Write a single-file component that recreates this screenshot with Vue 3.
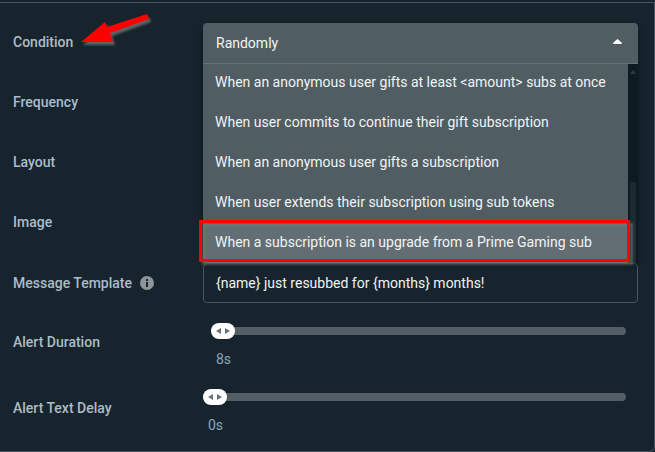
<script setup>
const fields = ['Condition', 'Frequency', 'Layout', 'Image']
const options = [
  'When an anonymous user gifts at least <amount> subs at once',
  'When user commits to continue their gift subscription',
  'When an anonymous user gifts a subscription',
  'When user extends their subscription using sub tokens',
  'When a subscription is an upgrade from a Prime Gaming sub'
]
const sliders = [
  { label: 'Alert Duration', value: '8s', offset: 8 },
  { label: 'Alert Text Delay', value: '0s', offset: 0 }
]
</script>

<template>
  <div class="panel">
    <div v-for="f in fields" :key="f" class="row">
      <div class="label">{{ f }}</div>
      <div class="field"></div>
    </div>

    <div class="row">
      <div class="label with-icon">
        Message Template
        <svg class="info" width="14" height="14" viewBox="0 0 14 14">
          <circle cx="7" cy="7" r="7" fill="#8d9599" />
          <rect x="6" y="6" width="2" height="5" fill="#17242d" />
          <rect x="6" y="3" width="2" height="2" fill="#17242d" />
        </svg>
      </div>
      <div class="input">{name} just resubbed for {months} months!</div>
    </div>

    <div v-for="s in sliders" :key="s.label" class="row slider-row">
      <div class="label">{{ s.label }}</div>
      <div class="slider" :style="{ paddingLeft: s.offset + 'px' }">
        <div class="track">
          <div class="thumb">
            <span class="tri left"></span>
            <span class="tri right"></span>
          </div>
        </div>
        <div class="value">{{ s.value }}</div>
      </div>
    </div>

    <div class="dropdown">
      <div class="selected">
        <span>Randomly</span>
        <svg class="caret" width="9" height="5" viewBox="0 0 9 5"><path d="M4.5 0 8.6 3.6Q9.2 5 8 5H1Q-.2 5 .4 3.6Z" fill="#fff" /></svg>
      </div>
      <div class="list">
        <div class="items">
          <div v-for="(o, i) in options" :key="o" class="option" :class="{ hover: i === 4 }">{{ o }}</div>
        </div>
        <div class="scrollbar">
          <span class="up"></span>
          <span class="bar"></span>
        </div>
      </div>
    </div>

    <div class="highlight"></div>

    <svg class="arrow" width="80" height="40" viewBox="0 0 80 40">
      <path d="M67 0 69 5 30 19 33 28H1L25 8 27 13Z" fill="#f00" />
    </svg>
  </div>
</template>

<style>
body { background: #17242d; }
</style>

<style scoped>
.panel {
  position: relative;
  box-sizing: border-box;
  margin-top: 2px;
  width: 655px;
  height: 450px;
  padding: 20px 0 0 13px;
  background: #17242d;
  border: 1px solid #46555d;
  border-left: 0;
  border-bottom-right-radius: 6px;
  font-family: Roboto, sans-serif;
  font-size: 14px;
  overflow: hidden;
}
.row {
  display: grid;
  grid-template-columns: 190px 435px;
  height: 40px;
  margin-bottom: 20px;
}
.slider-row { height: 46px; }
.label {
  line-height: 38px;
  font-weight: 500;
  color: #aabdc8;
  white-space: nowrap;
}
.with-icon { display: flex; align-items: center; height: 40px; }
.info { margin-left: 8px; }
.input {
  box-sizing: border-box;
  height: 40px;
  padding: 0 12px;
  line-height: 38px;
  color: #f0f3f4;
  border: 1px solid #46555d;
  border-radius: 4px;
}
.slider { box-sizing: border-box; width: 423px; padding-top: 4px; }
.track { height: 8px; border-radius: 4px; background: #535f65; }
.thumb {
  display: flex;
  align-items: center;
  justify-content: center;
  gap: 4px;
  position: relative;
  top: -4px;
  width: 24px;
  height: 16px;
  border-radius: 8px;
  background: #fff;
}
.tri { width: 0; height: 0; border-top: 3.5px solid transparent; border-bottom: 3.5px solid transparent; }
.tri.left { border-right: 5px solid #66737a; }
.tri.right { border-left: 5px solid #66737a; }
.value { margin: 16px 0 0 5px; line-height: 16px; color: #8fa7b6; }
.dropdown {
  position: absolute;
  left: 203px;
  top: 20px;
  width: 435px;
  border-radius: 4px 4px 0 0;
  background: #505d63;
  color: #f2f4f5;
  box-shadow: 0 2px 5px rgba(0, 0, 0, .45);
}
.selected {
  display: flex;
  align-items: center;
  justify-content: space-between;
  box-sizing: border-box;
  height: 41px;
  padding: 0 16px 0 13px;
  border-bottom: 1px solid #667277;
  line-height: 38px;
}
.caret { margin-bottom: 4px; }
.list { display: flex; height: 199px; overflow: hidden; }
.items { flex: 1; }
.option { height: 40px; padding-left: 12px; line-height: 37px; white-space: nowrap; }
.option.hover { background: #626e73; }
.scrollbar { position: relative; width: 10px; background: #0e1b23; }
.up {
  position: absolute;
  left: 2px;
  top: 6px;
  border-left: 3px solid transparent;
  border-right: 3px solid transparent;
  border-bottom: 4px solid #2c3a43;
}
.bar { position: absolute; left: 2px; right: 2px; top: 118px; bottom: 0; background: #1c2a33; border-radius: 3px 3px 0 0; }
.highlight {
  position: absolute;
  left: 199px;
  top: 217px;
  width: 431px;
  height: 42px;
  box-sizing: border-box;
  border: 3px solid #f00;
  filter: drop-shadow(3px 3px 1px rgba(120, 120, 120, .6));
}
.arrow {
  position: absolute;
  left: 80px;
  top: 11px;
  filter: drop-shadow(2px 3px 1px rgba(120, 120, 120, .75));
}
</style>
